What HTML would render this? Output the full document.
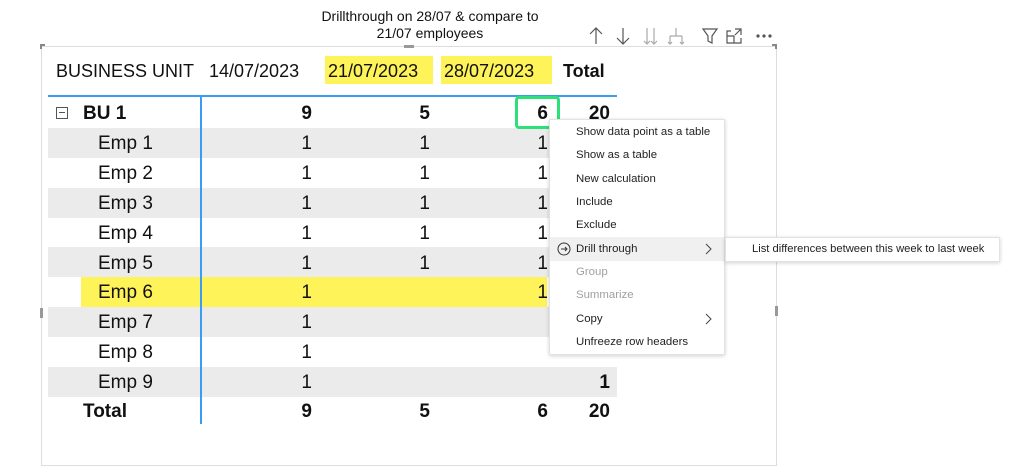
<!DOCTYPE html>
<html><head><style>
*{margin:0;padding:0;box-sizing:border-box}
body{width:1023px;height:452px;background:#fff;position:relative;overflow:hidden;font-family:"Liberation Sans",sans-serif;color:#111}
.a{position:absolute}
.t{font-size:19px;white-space:nowrap}
.h{font-size:18px}
.r{text-align:right}
.b{font-weight:bold}
.row{position:absolute;left:48px;width:569px;height:30px}
.g{background:#ebebeb}
.m{position:absolute;left:576px;font-size:11.4px;color:#222;white-space:nowrap}
.dis{color:#a0a0a0}
</style></head><body>
<div class="a" style="left:290px;top:8px;width:280px;text-align:center;font-size:14px;line-height:17px;color:#111">Drillthrough on 28/07 &amp; compare to<br>21/07 employees</div>
<svg class="a" style="left:586px;top:24px" width="190" height="24" fill="none" stroke="#555" stroke-width="1.2">
<path d="M10 4v16M4 10l6-6 6 6"/>
<path d="M37 4v16M31 14l6 6 6-6"/>
<path d="M61 4v16M58 17l3 3 3-3M68 4v16M65 17l3 3 3-3" stroke="#aaa"/>
<path d="M90 4v8M84 12h12M84 12v8M96 12v8M82 18l2 2 2-2M94 18l2 2 2-2" stroke="#aaa"/>
<path d="M117 5h14l-5 7v7l-4-2v-5z"/>
<path d="M145 7h-4v12h14v-5M141 12h7v7M149 5h6v6M155 5l-6 6"/>
<circle cx="172" cy="12" r="1" fill="#444"/><circle cx="178" cy="12" r="1" fill="#444"/><circle cx="184" cy="12" r="1" fill="#444"/>
</svg>
<div class="a" style="left:41px;top:46px;width:736px;height:420px;border:1px solid #ddd"></div>
<div class="a" style="left:40px;top:44px;width:5px;height:5px;border-left:2px solid #888;border-top:2px solid #888"></div>
<div class="a" style="left:772px;top:44px;width:5px;height:5px;border-right:2px solid #888;border-top:2px solid #888"></div>
<div class="a" style="left:404px;top:45px;width:10px;height:3px;background:#999"></div>
<div class="a" style="left:40px;top:308px;width:3px;height:10px;background:#999"></div>
<div class="a" style="left:775px;top:306px;width:3px;height:10px;background:#999"></div>
<div class="a" style="left:325px;top:56px;width:108px;height:28px;background:#fff35a"></div>
<div class="a" style="left:441px;top:56px;width:111px;height:28px;background:#fff35a"></div>
<div class="a t h" style="left:56px;top:61px">BUSINESS UNIT</div>
<div class="a t h" style="left:209px;top:61px">14/07/2023</div>
<div class="a t h" style="left:328px;top:61px">21/07/2023</div>
<div class="a t h" style="left:444px;top:61px">28/07/2023</div>
<div class="a t h b" style="left:563px;top:61px">Total</div>
<div class="a" style="left:48px;top:95px;width:569px;height:2px;background:#3b9cf5"></div>
<div class="row g" style="top:128px"></div>
<div class="row g" style="top:188px"></div>
<div class="row g" style="top:247px"></div>
<div class="row g" style="top:307px"></div>
<div class="row g" style="top:367px"></div>
<div class="a" style="left:81px;top:277px;width:466px;height:30px;background:#fff35a"></div>
<div class="a" style="left:200px;top:96px;width:2px;height:328px;background:#3b9cf5"></div>
<div class="a" style="left:56px;top:107px;width:12px;height:12px;border:1px solid #555"></div>
<div class="a" style="left:59px;top:112px;width:6px;height:1px;background:#555"></div>
<div class="a t b" style="left:83px;top:103px">BU 1</div>
<div class="a t b r" style="left:212px;top:103px;width:100px">9</div>
<div class="a t b r" style="left:330px;top:103px;width:100px">5</div>
<div class="a t b r" style="left:448px;top:103px;width:100px">6</div>
<div class="a t b r" style="left:510px;top:103px;width:100px">20</div>
<div class="a" style="left:515px;top:96px;width:45px;height:33px;border:3px solid #2ee07a;border-radius:4px"></div>
<div class="a t" style="left:98px;top:133px">Emp 1</div><div class="a t r" style="left:212px;top:133px;width:100px">1</div><div class="a t r" style="left:330px;top:133px;width:100px">1</div><div class="a t r" style="left:448px;top:133px;width:100px">1</div>
<div class="a t" style="left:98px;top:163px">Emp 2</div><div class="a t r" style="left:212px;top:163px;width:100px">1</div><div class="a t r" style="left:330px;top:163px;width:100px">1</div><div class="a t r" style="left:448px;top:163px;width:100px">1</div>
<div class="a t" style="left:98px;top:193px">Emp 3</div><div class="a t r" style="left:212px;top:193px;width:100px">1</div><div class="a t r" style="left:330px;top:193px;width:100px">1</div><div class="a t r" style="left:448px;top:193px;width:100px">1</div>
<div class="a t" style="left:98px;top:223px">Emp 4</div><div class="a t r" style="left:212px;top:223px;width:100px">1</div><div class="a t r" style="left:330px;top:223px;width:100px">1</div><div class="a t r" style="left:448px;top:223px;width:100px">1</div>
<div class="a t" style="left:98px;top:253px">Emp 5</div><div class="a t r" style="left:212px;top:253px;width:100px">1</div><div class="a t r" style="left:330px;top:253px;width:100px">1</div><div class="a t r" style="left:448px;top:253px;width:100px">1</div>
<div class="a t" style="left:98px;top:282px">Emp 6</div><div class="a t r" style="left:212px;top:282px;width:100px">1</div><div class="a t r" style="left:448px;top:282px;width:100px">1</div>
<div class="a t" style="left:98px;top:312px">Emp 7</div><div class="a t r" style="left:212px;top:312px;width:100px">1</div>
<div class="a t" style="left:98px;top:342px">Emp 8</div><div class="a t r" style="left:212px;top:342px;width:100px">1</div>
<div class="a t" style="left:98px;top:372px">Emp 9</div><div class="a t r" style="left:212px;top:372px;width:100px">1</div><div class="a t b r" style="left:510px;top:372px;width:100px">1</div>
<div class="a t b" style="left:83px;top:401px">Total</div>
<div class="a t b r" style="left:212px;top:401px;width:100px">9</div>
<div class="a t b r" style="left:330px;top:401px;width:100px">5</div>
<div class="a t b r" style="left:448px;top:401px;width:100px">6</div>
<div class="a t b r" style="left:510px;top:401px;width:100px">20</div>
<div class="a" style="left:549px;top:119px;width:176px;height:236px;background:#fff;border:1px solid #e2e2e2;box-shadow:0 1px 4px rgba(0,0,0,.18)"></div>
<div class="a" style="left:550px;top:237px;width:174px;height:24px;background:#f0f0f0"></div>
<div class="m" style="top:126px">Show data point as a table</div>
<div class="m" style="top:149px">Show as a table</div>
<div class="m" style="top:173px">New calculation</div>
<div class="m" style="top:196px">Include</div>
<div class="m" style="top:219px">Exclude</div>
<div class="m" style="top:243px">Drill through</div>
<svg class="a" style="left:557px;top:242px" width="14" height="14" fill="none" stroke="#333" stroke-width="1"><circle cx="7" cy="7" r="6"/><path d="M4 7h6M8 5l2 2-2 2"/></svg>
<svg class="a" style="left:704px;top:243px" width="8" height="12" fill="none" stroke="#444"><path d="M2 1l5 5-5 5"/></svg>
<div class="m dis" style="top:266px">Group</div>
<div class="m dis" style="top:289px">Summarize</div>
<div class="m" style="top:313px">Copy</div>
<svg class="a" style="left:704px;top:313px" width="8" height="12" fill="none" stroke="#444"><path d="M2 1l5 5-5 5"/></svg>
<div class="m" style="top:336px">Unfreeze row headers</div>
<div class="a" style="left:725px;top:237px;width:275px;height:25px;background:#fff;border:1px solid #e2e2e2;box-shadow:0 1px 4px rgba(0,0,0,.18)"></div>
<div class="m" style="left:752px;top:243px;font-size:11.2px">List differences between this week to last week</div>
</body></html>
